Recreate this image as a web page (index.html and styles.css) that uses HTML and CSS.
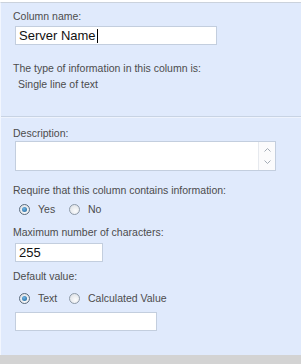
FILE: index.html
```html
<!DOCTYPE html>
<html>
<head>
<meta charset="utf-8">
<link rel="stylesheet" href="styles.css">
</head>
<body>
<div class="panel">
  <div class="section first">
    <div class="label">Column name:</div>
    <div class="input name-input"><span class="value">Server Name</span><span class="caret"></span></div>
    <div class="label type-label">The type of information in this column is:</div>
    <div class="label type-value">Single line of text</div>
  </div>
  <div class="separator"></div>
  <div class="section second">
    <div class="label">Description:</div>
    <div class="textarea">
      <div class="scroll">
        <svg width="7" height="4" viewBox="0 0 7 4"><path d="M0.5 3.5 L3.5 0.5 L6.5 3.5" fill="none" stroke="#a3abb5" stroke-width="1"/></svg>
        <svg width="7" height="4" viewBox="0 0 7 4"><path d="M0.5 0.5 L3.5 3.5 L6.5 0.5" fill="none" stroke="#a3abb5" stroke-width="1"/></svg>
      </div>
    </div>
    <div class="label req-label">Require that this column contains information:</div>
    <div class="radios yes-no">
      <div class="option"><span class="radio checked"></span><span class="rlabel">Yes</span></div>
      <div class="option"><span class="radio"></span><span class="rlabel">No</span></div>
    </div>
    <div class="label max-label">Maximum number of characters:</div>
    <div class="input num-input"><span class="value">255</span></div>
    <div class="label def-label">Default value:</div>
    <div class="radios default-type">
      <div class="option"><span class="radio checked"></span><span class="rlabel">Text</span></div>
      <div class="option"><span class="radio"></span><span class="rlabel">Calculated Value</span></div>
    </div>
    <div class="input def-input"></div>
  </div>
</div>
<div class="footer"></div>
</body>
</html>
```
FILE: styles.css
```css
html, body {
  margin: 0;
  padding: 0;
  background: #ffffff;
}
body {
  width: 301px;
  height: 364px;
  overflow: hidden;
  padding-top: 2px;
  box-sizing: border-box;
  font-family: "Liberation Sans", Arial, sans-serif;
  font-size: 10.5px;
  color: #4c4c4c;
}
.panel {
  background: #e0eafc;
  border-top: 1px solid #cbd2dc;
  border-left: 1px solid #f2f6fe;
  height: 353px;
  box-sizing: border-box;
}
.section {
  padding-left: 12px;
}
.section.first {
  padding-top: 6px;
  height: 113px;
  box-sizing: border-box;
}
.label {
  line-height: 14px;
  height: 14px;
  white-space: nowrap;
}
.input {
  background: #ffffff;
  border: 1px solid #c3cede;
  box-sizing: border-box;
  height: 19px;
  margin-left: 2px;
  display: flex;
  align-items: center;
  padding-left: 3px;
  color: #111111;
  font-size: 13px;
}
.name-input {
  width: 202px;
  margin-top: 3px;
}
.caret {
  display: inline-block;
  width: 1px;
  height: 14px;
  background: #000;
  margin-left: 1px;
}
.type-label {
  margin-top: 16px;
}
.type-value {
  margin-top: 2px;
  padding-left: 5px;
}
.separator {
  height: 1px;
  background: #c8d3e3;
  border-bottom: 1px solid #eef3fd;
}
.section.second {
  padding-top: 8px;
}
.textarea {
  width: 261px;
  height: 30px;
  margin-left: 2px;
  margin-top: 1px;
  background: #fff;
  border: 1px solid #c3cede;
  box-sizing: border-box;
  display: flex;
  justify-content: flex-end;
}
.scroll {
  width: 16px;
  border-left: 1px solid #e6e9ee;
  background: #fbfbfc;
  display: flex;
  flex-direction: column;
  justify-content: space-between;
  align-items: center;
  padding: 6px 0 6px;
}
.scroll svg { display: block; }
.req-label {
  margin-top: 12px;
}
.radios {
  display: grid;
  grid-template-columns: 50px auto;
  justify-content: start;
  align-items: center;
  margin-top: 5px;
  height: 14px;
  padding-left: 6px;
}
.option {
  display: flex;
  align-items: center;
  gap: 8px;
}
.radio {
  width: 11px;
  height: 11px;
  border-radius: 50%;
  border: 1px solid #8e9aa8;
  box-sizing: border-box;
  background: radial-gradient(circle at 60% 65%, #fbfcfd 0, #d9dde2 100%);
  position: relative;
  flex: none;
}
.radio.checked {
  border-color: #5b6b7c;
}
.radio.checked::after {
  content: "";
  position: absolute;
  left: 2px;
  top: 2px;
  width: 5px;
  height: 5px;
  border-radius: 50%;
  background: radial-gradient(circle at 40% 35%, #6fb6e6 0, #1d5f94 100%);
}
.max-label {
  margin-top: 9px;
}
.num-input {
  width: 88px;
  margin-top: 4px;
}
.def-label {
  margin-top: 7px;
}
.radios.default-type {
  margin-top: 8px;
}
.def-input {
  width: 142px;
  margin-top: 7px;
}
.footer {
  height: 9px;
  background: #d3d3d3;
}
```
